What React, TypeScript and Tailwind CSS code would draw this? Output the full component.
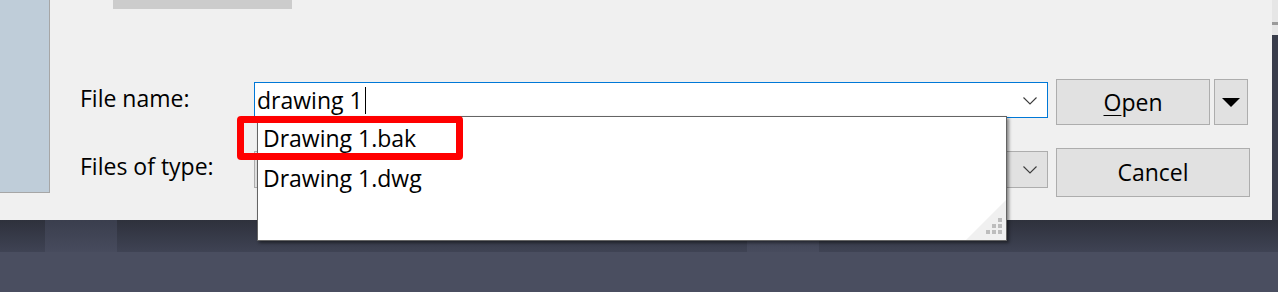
import React from "react";

const font = { fontFamily: '"Open Sans", "Noto Sans", "Liberation Sans", sans-serif' };

function Chevron() {
  return (
    <svg width="14" height="8" viewBox="0 0 14 8" className="block">
      <path d="M0.5 0.5 L7 7 L13.5 0.5" fill="none" stroke="#3c3c3c" strokeWidth="1.1" />
    </svg>
  );
}

export default function App() {
  return (
    <div className="relative w-[1278px] h-[292px] overflow-hidden bg-[#4a4e60]" style={font}>
      {/* top area: dialog + right strip */}
      <div className="flex h-[220px]">
        <div className="relative flex w-[1272px] h-[220px] bg-[#f0f0f0]">
          {/* left panel */}
          <div className="w-[50px] h-[193px] bg-[#bfcdd9] border-r border-b border-[#a6a6a6] shrink-0" />
          {/* content */}
          <div className="flex flex-col flex-1">
            <div className="flex h-[9px]">
              <div className="ml-[63px] w-[179px] h-[9px] bg-[#cccccc]" />
            </div>
            <div className="flex flex-col pl-[30px] pt-[70px]">
              {/* row 1 */}
              <div className="flex items-start h-[46px]">
                <div className="w-[174px] mt-[4px] text-[23px] leading-[30px] text-black">File name:</div>
                <div className="mt-[3px] w-[794px] h-[36px] bg-white border border-[#0078d7] flex items-center">
                  <span className="pl-[2px] text-[23px] leading-[30px] text-black">drawing 1</span>
                  <span className="ml-[2px] w-px h-[27px] bg-black" />
                  <div className="ml-auto mr-[10px] mt-[1px]">
                    <Chevron />
                  </div>
                </div>
                <div className="ml-[8px] w-[154px] h-[46px] bg-[#e1e1e1] border border-[#adadad] flex items-center justify-center text-[23px] text-black">
                  <span className="underline underline-offset-[4px] decoration-1">O</span>
                  <span>pen</span>
                </div>
                <div className="ml-[4px] w-[34px] h-[46px] bg-[#e1e1e1] border border-[#adadad] flex items-center justify-center">
                  <svg width="18" height="9" viewBox="0 0 18 9" className="block">
                    <path d="M0 0 H18 L9 9 Z" fill="#000" />
                  </svg>
                </div>
              </div>
              {/* row 2 */}
              <div className="flex items-start h-[49px] mt-[23px]">
                <div className="w-[174px] mt-[3px] text-[23px] leading-[30px] text-black">Files of type:</div>
                <div className="mt-[3px] w-[794px] h-[37px] bg-[#e1e1e1] border border-[#adadad] flex items-center">
                  <div className="ml-auto mr-[10px] mt-[1px]">
                    <Chevron />
                  </div>
                </div>
                <div className="ml-[8px] w-[194px] h-[49px] bg-[#e1e1e1] border border-[#adadad] flex items-center justify-center text-[23px] text-black">
                  Cancel
                </div>
              </div>
            </div>
          </div>
        </div>
        {/* right strip */}
        <div className="flex flex-col w-[6px]">
          <div className="h-[22px] bg-[#e6e6e6]" />
          <div className="h-[3px] bg-[#9a9a9a]" />
          <div className="h-[10px] bg-[#e6e6e6]" />
          <div className="flex-1 bg-[#393d4b]" />
        </div>
      </div>
      {/* dark band under dialog */}
      <div className="relative h-[32px] bg-gradient-to-b from-[#2e313c] to-[#3f4354] flex">
        <div className="ml-[45px] w-[72px] h-full bg-gradient-to-b from-[#3a3e4d] to-[#474b5d]" />
        <div className="ml-[630px] w-[72px] h-full bg-gradient-to-b from-[#3a3e4d] to-[#474b5d]" />
      </div>
      <div className="h-[40px] bg-[#4a4e60]" />

      {/* autocomplete dropdown list */}
      <div className="absolute left-[257px] top-[116px] w-[750px] h-[125px] bg-white border border-[#646464] shadow-[2px_2px_3px_rgba(0,0,0,0.45)]">
        <div className="pl-[5px] pt-[6px] text-[23px] leading-[30px] text-black">Drawing 1.bak</div>
        <div className="pl-[5px] mt-[10px] text-[23px] leading-[30px] text-black">Drawing 1.dwg</div>
        {/* resize grip */}
        <div className="absolute right-0 bottom-0 w-[40px] h-[40px]">
          <svg width="40" height="40" viewBox="0 0 40 40" className="block">
            <path d="M40 0 L40 40 L0 40 Z" fill="#f0f0f0" />
            <rect x="32" y="18" width="4" height="4" fill="#bdbdbd" />
            <rect x="26" y="24" width="4" height="4" fill="#bdbdbd" />
            <rect x="32" y="24" width="4" height="4" fill="#bdbdbd" />
            <rect x="20" y="30" width="4" height="4" fill="#bdbdbd" />
            <rect x="26" y="30" width="4" height="4" fill="#bdbdbd" />
            <rect x="32" y="30" width="4" height="4" fill="#bdbdbd" />
          </svg>
        </div>
      </div>

      {/* red highlight box */}
      <div className="absolute left-[237px] top-[116px] w-[226px] h-[44px] border-[7px] border-[#ff0000] rounded-[4px]" />
    </div>
  );
}
